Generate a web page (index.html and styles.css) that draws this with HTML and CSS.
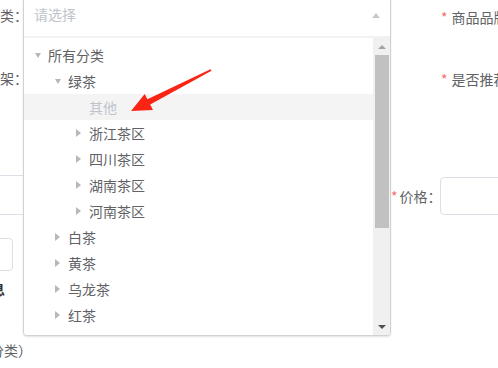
FILE: index.html
```html
<!DOCTYPE html>
<html lang="zh-CN">
<head>
  <meta charset="UTF-8">
  <title>商品编辑</title>
  <link rel="stylesheet" href="styles.css">
</head>
<body>

  <div class="page">
    <div class="form">
      <div class="col-left">
        <div class="row r1"><span class="lbl">商品分类：</span></div>
        <div class="row r2"><span class="lbl">是否上架：</span></div>
        <div class="wide-input"></div>
        <div class="small-box"></div>
        <div class="section-title">基本信息</div>
        <div class="hint">（请选择分类）</div>
      </div>
      <div class="col-right">
        <div class="rlbl first"><i>*</i>商品品牌</div>
        <div class="rlbl second"><i>*</i>是否推荐</div>
        <div class="price-row">
          <span class="rlbl price"><i>*</i><b>价格：</b></span>
          <div class="input"></div>
        </div>
      </div>
    </div>

    <div class="dropdown">
      <div class="select">
        <span class="placeholder">请选择</span>
        <span class="caret"></span>
      </div>
      <div class="panel">
        <div class="tree">
          <div class="node lv0"><span class="tw down"></span>所有分类</div>
          <div class="node lv1"><span class="tw down"></span>绿茶</div>
          <div class="node lv2 disabled"><span class="tw"></span>其他</div>
          <div class="node lv2"><span class="tw right"></span>浙江茶区</div>
          <div class="node lv2"><span class="tw right"></span>四川茶区</div>
          <div class="node lv2"><span class="tw right"></span>湖南茶区</div>
          <div class="node lv2"><span class="tw right"></span>河南茶区</div>
          <div class="node lv1"><span class="tw right"></span>白茶</div>
          <div class="node lv1"><span class="tw right"></span>黄茶</div>
          <div class="node lv1"><span class="tw right"></span>乌龙茶</div>
          <div class="node lv1"><span class="tw right"></span>红茶</div>
        </div>
        <div class="scrollbar">
          <div class="sb-btn"><span class="sb-up"></span></div>
          <div class="sb-thumb"></div>
          <div class="sb-space"></div>
          <div class="sb-btn"><span class="sb-down"></span></div>
        </div>
      </div>
    </div>

    <svg class="mark" width="498" height="368" viewBox="0 0 498 368">
      <polygon points="131,111 153,110 150.2,104.6 211.5,70.8 210.5,69.2 147.4,99.2 144.7,93.9" fill="#fa2414"/>
    </svg>
  </div>

</body>
</html>
```

FILE: styles.css
```css
body {
  margin: 0;
  font-family: "Noto Sans CJK SC", "Noto Sans", sans-serif;
  font-size: 14px;
  color: #606266;
  background: #fff;
}

.page {
  position: relative;
  width: 498px;
  height: 368px;
  overflow: hidden;
}

.form {
  display: flex;
}

.col-left {
  width: 390px;
  flex: none;
}

.row {
  height: 30px;
  line-height: 30px;
}

.r2 {
  margin-top: 33px;
}

.lbl {
  display: block;
  width: 100px;
  margin-left: -72px;
  text-align: right;
  white-space: nowrap;
  font-variant-east-asian: full-width;
}

.wide-input {
  margin-top: 82px;
  margin-left: -100px;
  width: 460px;
  height: 40px;
  box-sizing: border-box;
  border: 1px solid #dcdfe6;
  border-radius: 4px;
}

.small-box {
  margin-top: 23px;
  margin-left: -60px;
  width: 73px;
  height: 33px;
  box-sizing: border-box;
  border: 1px solid #dcdfe6;
  border-radius: 4px;
}

.section-title {
  margin-top: 8px;
  margin-left: -95px;
  width: 100px;
  text-align: right;
  line-height: 20px;
  font-weight: bold;
  color: #303133;
  white-space: nowrap;
}

.hint {
  margin-top: 41px;
  margin-left: -168px;
  width: 200px;
  text-align: right;
  line-height: 20px;
  white-space: nowrap;
  font-variant-east-asian: full-width;
}

.col-right {
  flex: 1;
}

.rlbl {
  line-height: 20px;
  white-space: nowrap;
}

.rlbl i {
  font-style: normal;
  color: #f56c6c;
  margin-right: 4px;
}

.first {
  margin-top: 7px;
  padding-left: 51px;
}

.second {
  margin-top: 42px;
  padding-left: 51px;
}

.price-row {
  display: flex;
  align-items: center;
  margin-top: 88px;
}

.price {
  padding-left: 1px;
  width: 49px;
  overflow: hidden;
}

.price i {
  margin-right: 2px;
}

.price b {
  font-weight: normal;
  font-variant-east-asian: full-width;
}

.input {
  width: 80px;
  height: 38px;
  box-sizing: border-box;
  border: 1px solid #dcdfe6;
  border-radius: 4px;
}

/* dropdown over the form */
.dropdown {
  position: absolute;
  left: 23px;
  top: -10px;
  width: 368px;
  height: 346px;
  box-sizing: border-box;
  border: 1px solid #d2d2d2;
  border-radius: 4px;
  background: #f2f2f2;
  box-shadow: 0 1px 2px rgba(0,0,0,0.12);
  display: flex;
  flex-direction: column;
  overflow: hidden;
}

.select {
  position: relative;
  height: 45px;
  background: #fff;
  display: flex;
  align-items: center;
  padding: 1px 0 0 10px;
  box-sizing: border-box;
}

.placeholder {
  color: #c0c4cc;
}

.caret {
  position: absolute;
  right: 10px;
  top: 22px;
  width: 0;
  height: 0;
  border-left: 4px solid transparent;
  border-right: 4px solid transparent;
  border-bottom: 5px solid #c8c8c8;
}

.panel {
  margin-top: 2px;
  flex: 1;
  display: flex;
}

.tree {
  flex: 1;
  background: #fff;
  padding-top: 4px;
}

.node {
  height: 26px;
  display: flex;
  align-items: center;
  white-space: nowrap;
}

.node.lv0 { padding-left: 11px; }
.node.lv1 { padding-left: 31px; }
.node.lv2 { padding-left: 52px; }

.node.disabled {
  background: #f4f4f5;
  color: #c0c4cc;
}

.tw {
  width: 13px;
  flex: none;
  display: flex;
  align-items: center;
}

.tw.down::before {
  content: "";
  border-left: 3.5px solid transparent;
  border-right: 3.5px solid transparent;
  border-top: 5px solid #b8b8b8;
}

.tw.right::before {
  content: "";
  border-top: 4.5px solid transparent;
  border-bottom: 4.5px solid transparent;
  border-left: 5px solid #b8b8b8;
}

.scrollbar {
  width: 17px;
  background: #f0f0f0;
  display: flex;
  flex-direction: column;
}

.sb-btn {
  height: 17px;
  display: flex;
  align-items: center;
  justify-content: center;
}

.sb-up {
  border-left: 4px solid transparent;
  border-right: 4px solid transparent;
  border-bottom: 4px solid #a3a3a3;
}

.sb-down {
  border-left: 4px solid transparent;
  border-right: 4px solid transparent;
  border-top: 4px solid #505050;
}

.sb-thumb {
  height: 173px;
  margin: 0 1px 0 2px;
  background: #c1c1c1;
}

.sb-space {
  flex: 1;
}

.mark {
  position: absolute;
  left: 0;
  top: 0;
  pointer-events: none;
}
```
